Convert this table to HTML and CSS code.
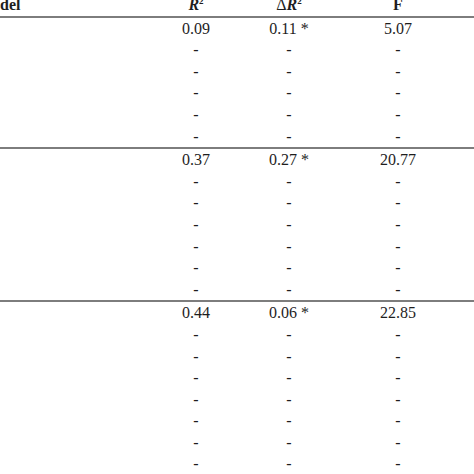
FILE: index.html
```html
<!DOCTYPE html>
<html>
<head>
<meta charset="utf-8">
<link rel="stylesheet" href="styles.css">
</head>
<body>
<div class="table">
  <div class="row head">
    <div class="c first">Model</div>
    <div class="c"><i>R</i><sup>2</sup></div>
    <div class="c"><span class="delta">Δ</span><i>R</i><sup>2</sup></div>
    <div class="c">F</div>
    <div class="c"></div>
  </div>
  <div class="section">
    <div class="row"><div class="c first"></div><div class="c">0.09</div><div class="c">0.11 *</div><div class="c">5.07</div><div class="c"></div></div>
    <div class="row"><div class="c first"></div><div class="c">-</div><div class="c">-</div><div class="c">-</div><div class="c"></div></div>
    <div class="row"><div class="c first"></div><div class="c">-</div><div class="c">-</div><div class="c">-</div><div class="c"></div></div>
    <div class="row"><div class="c first"></div><div class="c">-</div><div class="c">-</div><div class="c">-</div><div class="c"></div></div>
    <div class="row"><div class="c first"></div><div class="c">-</div><div class="c">-</div><div class="c">-</div><div class="c"></div></div>
    <div class="row"><div class="c first"></div><div class="c">-</div><div class="c">-</div><div class="c">-</div><div class="c"></div></div>
  </div>
  <div class="section">
    <div class="row"><div class="c first"></div><div class="c">0.37</div><div class="c">0.27 *</div><div class="c">20.77</div><div class="c"></div></div>
    <div class="row"><div class="c first"></div><div class="c">-</div><div class="c">-</div><div class="c">-</div><div class="c"></div></div>
    <div class="row"><div class="c first"></div><div class="c">-</div><div class="c">-</div><div class="c">-</div><div class="c"></div></div>
    <div class="row"><div class="c first"></div><div class="c">-</div><div class="c">-</div><div class="c">-</div><div class="c"></div></div>
    <div class="row"><div class="c first"></div><div class="c">-</div><div class="c">-</div><div class="c">-</div><div class="c"></div></div>
    <div class="row"><div class="c first"></div><div class="c">-</div><div class="c">-</div><div class="c">-</div><div class="c"></div></div>
    <div class="row"><div class="c first"></div><div class="c">-</div><div class="c">-</div><div class="c">-</div><div class="c"></div></div>
  </div>
  <div class="section">
    <div class="row"><div class="c first"></div><div class="c">0.44</div><div class="c">0.06 *</div><div class="c">22.85</div><div class="c"></div></div>
    <div class="row"><div class="c first"></div><div class="c">-</div><div class="c">-</div><div class="c">-</div><div class="c"></div></div>
    <div class="row"><div class="c first"></div><div class="c">-</div><div class="c">-</div><div class="c">-</div><div class="c"></div></div>
    <div class="row"><div class="c first"></div><div class="c">-</div><div class="c">-</div><div class="c">-</div><div class="c"></div></div>
    <div class="row"><div class="c first"></div><div class="c">-</div><div class="c">-</div><div class="c">-</div><div class="c"></div></div>
    <div class="row"><div class="c first"></div><div class="c">-</div><div class="c">-</div><div class="c">-</div><div class="c"></div></div>
    <div class="row"><div class="c first"></div><div class="c">-</div><div class="c">-</div><div class="c">-</div><div class="c"></div></div>
    <div class="row"><div class="c first"></div><div class="c">-</div><div class="c">-</div><div class="c">-</div><div class="c"></div></div>
  </div>
</div>
</body>
</html>
```

FILE: styles.css
```css
html, body {
  margin: 0;
  padding: 0;
  background: #fff;
  overflow: hidden;
  width: 474px;
  height: 474px;
}
.table {
  margin-top: -6px;
  margin-left: -23px;
  width: 530px;
  font-family: "Liberation Serif", "Times New Roman", serif;
  font-size: 16px;
  color: #1e1e1e;
}
.row {
  display: grid;
  grid-template-columns: 173px 92px 94px 124px 1fr;
  height: 21.6px;
  line-height: 21.6px;
}
.c {
  text-align: center;
  white-space: nowrap;
}
.c.first {
  text-align: left;
}
.head {
  font-weight: bold;
}
.head sup {
  font-size: 9px;
  vertical-align: 6px;
  line-height: 0;
  font-weight: bold;
}
.head .delta {
  font-weight: normal;
}
.section {
  border-top: 2px solid #7d7d7d;
}
```
